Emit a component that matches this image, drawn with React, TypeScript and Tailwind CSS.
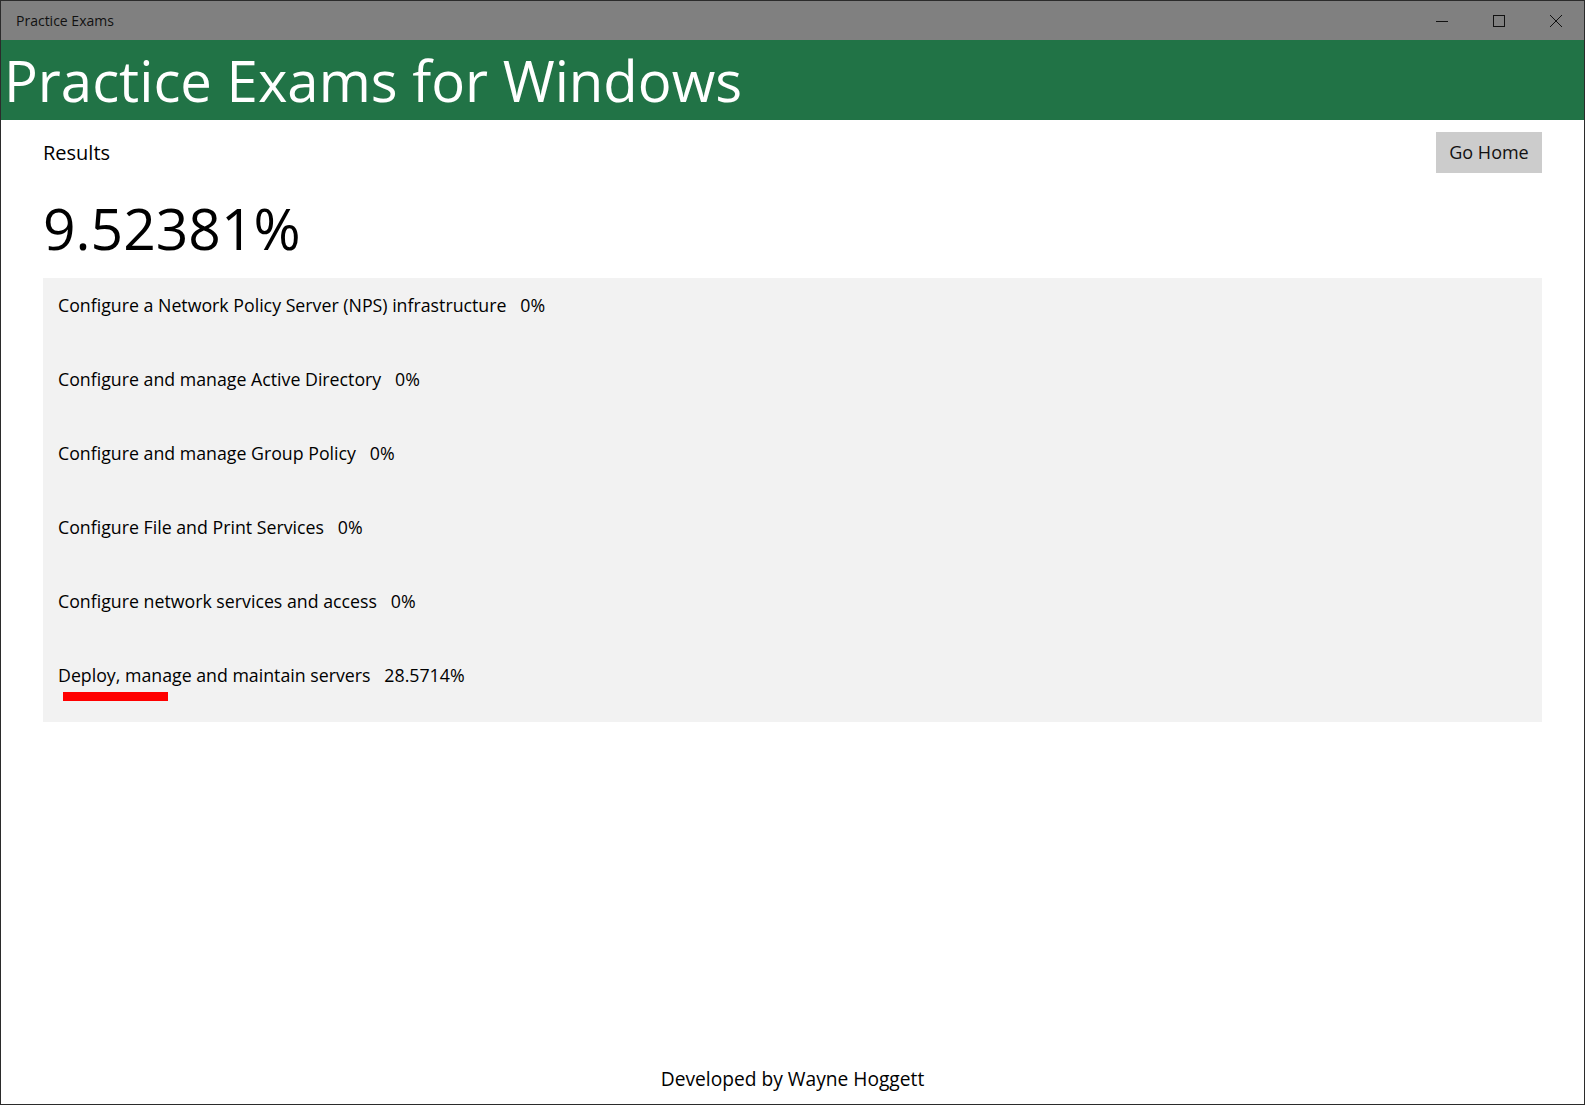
import React from "react";

const rows: [string, string][] = [
  ["Configure a Network Policy Server (NPS) infrastructure", "0%"],
  ["Configure and manage Active Directory", "0%"],
  ["Configure and manage Group Policy", "0%"],
  ["Configure File and Print Services", "0%"],
  ["Configure network services and access", "0%"],
  ["Deploy, manage and maintain servers", "28.5714%"],
];

export default function App() {
  return (
    <div
      className="w-[1585px] h-[1105px] border border-[#2b2b2b] bg-white flex flex-col overflow-hidden text-black"
      style={{ fontFamily: '"Open Sans", "Noto Sans", sans-serif' }}
    >
      {/* title bar */}
      <div className="h-[39px] bg-[#808080] flex items-center shrink-0">
        <div className="pl-[15px] text-[14px] text-[#111]">Practice Exams</div>
        <div className="ml-auto flex h-full">
          <div className="w-[57px] h-full flex items-center justify-center">
            <svg width="12" height="12" viewBox="0 0 12 12">
              <line x1="0" y1="6.5" x2="12" y2="6.5" stroke="#111" strokeWidth="1" />
            </svg>
          </div>
          <div className="w-[57px] h-full flex items-center justify-center">
            <svg width="12" height="12" viewBox="0 0 12 12">
              <rect x="0.5" y="0.5" width="11" height="11" fill="none" stroke="#111" strokeWidth="1" />
            </svg>
          </div>
          <div className="w-[57px] h-full flex items-center justify-center">
            <svg width="12" height="12" viewBox="0 0 12 12">
              <path d="M0 0 L12 12 M12 0 L0 12" stroke="#111" strokeWidth="1" />
            </svg>
          </div>
        </div>
      </div>

      {/* header */}
      <div className="h-[80px] bg-[#217346] shrink-0 flex items-center">
        <div className="pl-[3px] text-white text-[56.3px] leading-none">Practice Exams for Windows</div>
      </div>

      {/* content */}
      <div className="flex-1 flex flex-col px-[42px]">
        <div className="pt-[12px] flex items-center justify-between">
          <div className="text-[20px]">Results</div>
          <button className="h-[41px] w-[106px] bg-[#cccccc] text-[18px] text-[#111]">Go Home</button>
        </div>

        <div className="mt-[27px] text-[57px] leading-none">9.52381%</div>

        <div className="mt-[21px] h-[444px] bg-[#f2f2f2] pl-[15px] pt-[14px]">
          {rows.map(([name, pct], i) => (
            <div key={name} className={i < rows.length - 1 ? "h-[74px]" : ""}>
              <div className="h-[26px] flex items-center text-[17.75px] whitespace-pre">
                {name}
                {"   "}
                {pct}
              </div>
              {i === rows.length - 1 && (
                <div className="mt-[4px] ml-[5px] w-[105px] h-[9px] bg-[#ff0000]" />
              )}
            </div>
          ))}
        </div>

        <div className="flex-1" />
        <div className="pb-[12px] text-center text-[19.2px] leading-[26px]">Developed by Wayne Hoggett</div>
      </div>
    </div>
  );
}
